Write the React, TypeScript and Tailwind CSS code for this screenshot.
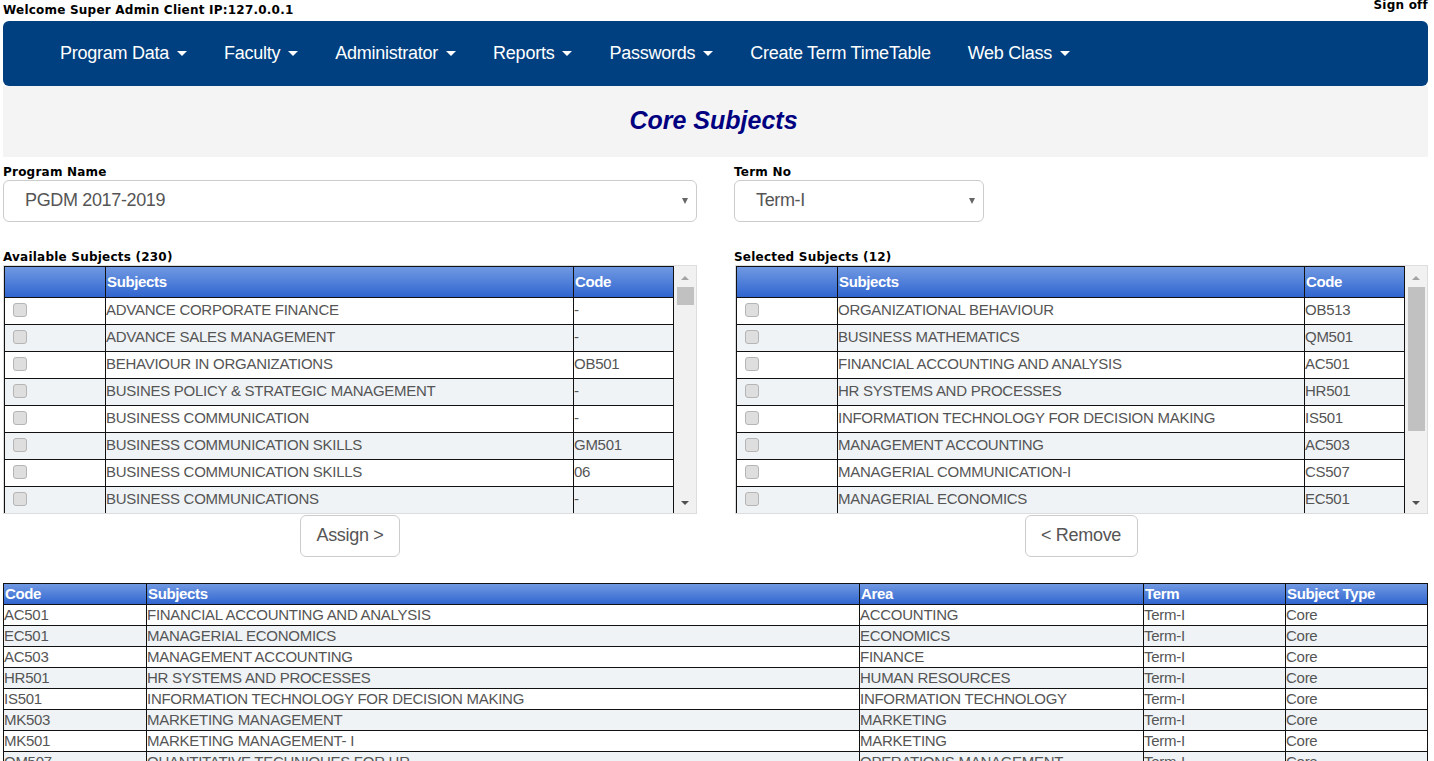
const navItems = [
  { label: 'Program Data', caret: true },
  { label: 'Faculty', caret: true },
  { label: 'Administrator', caret: true },
  { label: 'Reports', caret: true },
  { label: 'Passwords', caret: true },
  { label: 'Create Term TimeTable', caret: false },
  { label: 'Web Class', caret: true },
];

const available = [
  ['ADVANCE CORPORATE FINANCE', '-'],
  ['ADVANCE SALES MANAGEMENT', '-'],
  ['BEHAVIOUR IN ORGANIZATIONS', 'OB501'],
  ['BUSINES POLICY & STRATEGIC MANAGEMENT', '-'],
  ['BUSINESS COMMUNICATION', '-'],
  ['BUSINESS COMMUNICATION SKILLS', 'GM501'],
  ['BUSINESS COMMUNICATION SKILLS', '06'],
  ['BUSINESS COMMUNICATIONS', '-'],
];

const selected = [
  ['ORGANIZATIONAL BEHAVIOUR', 'OB513'],
  ['BUSINESS MATHEMATICS', 'QM501'],
  ['FINANCIAL ACCOUNTING AND ANALYSIS', 'AC501'],
  ['HR SYSTEMS AND PROCESSES', 'HR501'],
  ['INFORMATION TECHNOLOGY FOR DECISION MAKING', 'IS501'],
  ['MANAGEMENT ACCOUNTING', 'AC503'],
  ['MANAGERIAL COMMUNICATION-I', 'CS507'],
  ['MANAGERIAL ECONOMICS', 'EC501'],
];

const core = [
  ['AC501', 'FINANCIAL ACCOUNTING AND ANALYSIS', 'ACCOUNTING'],
  ['EC501', 'MANAGERIAL ECONOMICS', 'ECONOMICS'],
  ['AC503', 'MANAGEMENT ACCOUNTING', 'FINANCE'],
  ['HR501', 'HR SYSTEMS AND PROCESSES', 'HUMAN RESOURCES'],
  ['IS501', 'INFORMATION TECHNOLOGY FOR DECISION MAKING', 'INFORMATION TECHNOLOGY'],
  ['MK503', 'MARKETING MANAGEMENT', 'MARKETING'],
  ['MK501', 'MARKETING MANAGEMENT- I', 'MARKETING'],
  ['QM507', 'QUANTITATIVE TECHNIQUES FOR HR', 'OPERATIONS MANAGEMENT'],
];

const headBg = 'bg-gradient-to-b from-[#7199e2] to-[#2d63cf]';
const thCls = 'border border-[#111111] p-0 pl-[1px] text-left align-middle font-bold text-white text-[15px] leading-[18px] tracking-[-0.35px]';
const tdCls = 'border border-[#111111] p-0 text-left text-[#555555] text-[15px] leading-[18px] tracking-[-0.27px] whitespace-nowrap overflow-hidden';
const labelCls = "font-['DejaVu_Sans',Verdana,sans-serif] text-[12px] font-bold leading-[14px] tracking-[0.22px] text-black";
const btnCls = 'h-[42px] rounded-[6px] border border-[#cccccc] bg-white pb-[2px] text-[18px] tracking-[-0.3px] text-[#555555]';

function Caret() {
  return <span className="ml-[8px] inline-block h-0 w-0 border-x-[5px] border-t-[5px] border-x-transparent border-t-white align-middle" />;
}

function FakeSelect({ value, width }: { value: string; width: string }) {
  return (
    <div className={`${width} flex h-[42px] items-center justify-between rounded-[6px] border border-[#cccccc] bg-white pl-[21px] pr-[8px] text-[18px] tracking-[-0.35px] text-[#555555]`}>
      <span className="pb-[2px]">{value}</span>
      <span className="h-0 w-0 border-x-[3px] border-t-[6px] border-x-transparent border-t-[#666666]" />
    </div>
  );
}

function ScrollBar({ thumb }: { thumb: string }) {
  return (
    <div className="flex w-[22px] shrink-0 flex-col items-center bg-[#f1f1f1]">
      <div className="flex h-[21px] items-center justify-center pt-[2px]">
        <span className="h-0 w-0 border-x-[4px] border-b-[4px] border-x-transparent border-b-[#a3a3a3]" />
      </div>
      <div className={`${thumb} w-[17px] bg-[#c1c1c1]`} />
      <div className="flex-1" />
      <div className="flex h-[21px] items-center justify-center">
        <span className="h-0 w-0 border-x-[4px] border-t-[4px] border-x-transparent border-t-[#505050]" />
      </div>
    </div>
  );
}

function SubjectList({ rows, thumb, className }: { rows: string[][]; thumb: string; className: string }) {
  return (
    <div className={`${className} flex h-[249px] overflow-hidden border border-[#dddddd]`}>
      <div className="flex-1 overflow-hidden">
        <table className="w-full table-fixed border-collapse">
          <colgroup>
            <col className="w-[101px]" />
            <col />
            <col className="w-[100px]" />
          </colgroup>
          <thead>
            <tr className={`h-[31px] ${headBg}`}>
              <th className={thCls}></th>
              <th className={thCls}>Subjects</th>
              <th className={thCls}>Code</th>
            </tr>
          </thead>
          <tbody>
            {rows.map((r, i) => (
              <tr key={i} className={`h-[27px] ${i % 2 ? 'bg-[#eff3f6]' : 'bg-white'}`}>
                <td className={tdCls}>
                  <span className="mb-[2px] ml-[8px] block h-[14px] w-[14px] rounded-[3px] border border-[#b5b5b5] bg-[#dedede]" />
                </td>
                <td className={`${tdCls} pb-[2px]`}>{r[0]}</td>
                <td className={`${tdCls} pb-[2px]`}>{r[1]}</td>
              </tr>
            ))}
          </tbody>
        </table>
      </div>
      <ScrollBar thumb={thumb} />
    </div>
  );
}

export default function App() {
  return (
    <div className="h-screen overflow-hidden bg-white pl-[3px] pr-[6px] font-['Liberation_Sans',Arial,sans-serif]">
      {/* top line */}
      <div className={`flex h-[21px] items-start justify-between ${labelCls}`}>
        <span className="pt-[3px]">Welcome Super Admin Client IP:127.0.0.1</span>
        <span className="leading-[10px]">Sign off</span>
      </div>

      {/* nav */}
      <div className="flex h-[65px] items-center gap-[37px] rounded-[6px] bg-[#004080] pb-[1px] pl-[57px] text-[18px] tracking-[-0.25px] text-white">
        {navItems.map((n) => (
          <span key={n.label} className="whitespace-nowrap">
            {n.label}
            {n.caret && <Caret />}
          </span>
        ))}
      </div>

      {/* title */}
      <div className="flex h-[71px] items-center justify-center bg-[#f4f4f4] pb-[2px] pr-[4px]">
        <h1 className="text-[25px] font-bold italic text-[#000080]">Core Subjects</h1>
      </div>

      {/* selects */}
      <div className="mt-[8px] flex gap-[37px]">
        <div className="w-[694px]">
          <div className={`h-[15px] ${labelCls}`}>Program Name</div>
          <FakeSelect value="PGDM 2017-2019" width="w-[694px]" />
        </div>
        <div className="flex-1">
          <div className={`h-[15px] ${labelCls}`}>Term No</div>
          <FakeSelect value="Term-I" width="w-[250px]" />
        </div>
      </div>

      {/* lists */}
      <div className="mt-[27px] flex gap-[37px]">
        <div className="w-[694px]">
          <div className={`h-[16px] pt-[1px] ${labelCls}`}>Available Subjects (230)</div>
          <SubjectList rows={available} thumb="h-[18px]" className="w-full" />
          <div className="flex justify-center pt-[1px]">
            <button className={`${btnCls} w-[100px]`}>Assign &gt;</button>
          </div>
        </div>
        <div className="w-[694px]">
          <div className={`h-[16px] pt-[1px] ${labelCls}`}>Selected Subjects (12)</div>
          <SubjectList rows={selected} thumb="h-[144px]" className="ml-[1px] w-[693px]" />
          <div className="flex justify-center pt-[1px]">
            <button className={`${btnCls} w-[113px]`}>&lt; Remove</button>
          </div>
        </div>
      </div>

      {/* core table */}
      <table className="mt-[26px] w-full table-fixed border-collapse">
        <colgroup>
          <col className="w-[143px]" />
          <col className="w-[713px]" />
          <col className="w-[284px]" />
          <col className="w-[142px]" />
          <col />
        </colgroup>
        <thead>
          <tr className={`h-[21px] ${headBg}`}>
            <th className={thCls}>Code</th>
            <th className={thCls}>Subjects</th>
            <th className={thCls}>Area</th>
            <th className={thCls}>Term</th>
            <th className={thCls}>Subject Type</th>
          </tr>
        </thead>
        <tbody>
          {core.map((r, i) => (
            <tr key={i} className={`h-[21px] ${i % 2 ? 'bg-[#eff3f6]' : 'bg-white'}`}>
              <td className={tdCls}>{r[0]}</td>
              <td className={tdCls}>{r[1]}</td>
              <td className={tdCls}>{r[2]}</td>
              <td className={tdCls}>Term-I</td>
              <td className={tdCls}>Core</td>
            </tr>
          ))}
        </tbody>
      </table>
    </div>
  );
}
